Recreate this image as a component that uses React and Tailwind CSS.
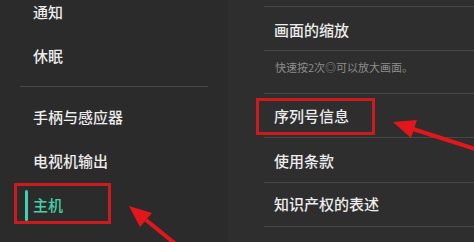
import React from "react";

const font = { fontFamily: '"Noto Sans CJK SC", "Noto Sans", sans-serif' };

function LeftItem({ label, active }) {
  return (
    <div className="h-[44px] flex items-center pl-[25px]">
      {active ? (
        <>
          <div className="w-[3px] h-[31px] bg-[#3fd3b0] rounded-sm" />
          <span className="ml-[5px] text-[15px] font-medium text-[#45cfa9]">{label}</span>
        </>
      ) : (
        <span className="ml-[8px] text-[15px] font-medium text-[#ececec]">{label}</span>
      )}
    </div>
  );
}

function RightRow({ children, h = "h-[44px]" }) {
  return (
    <div className={`${h} border-t border-[#474747] flex items-center pl-[10px]`}>
      {children}
    </div>
  );
}

export default function App() {
  return (
    <div
      className="relative w-[474px] h-[242px] overflow-hidden flex bg-[#2d2d2d]"
      style={font}
    >
      <div className="w-[228px] bg-[#2b2b2b] flex flex-col">
        <div className="mt-[-10px]">
          <LeftItem label="通知" />
          <LeftItem label="休眠" />
        </div>
        <div className="h-[17px] flex items-center pl-[20px] pr-[20px]">
          <div className="h-px w-full bg-[#484848]" />
        </div>
        <LeftItem label="手柄与感应器" />
        <LeftItem label="电视机输出" />
        <LeftItem label="主机" active />
      </div>
      <div className="flex-1 bg-[#2e2e2e] pt-[6px] pl-[36px]">
        <RightRow>
          <span className="text-[15px] font-medium text-[#ececec] mt-[3px]">画面的缩放</span>
        </RightRow>
        <div className="h-[43px] border-t border-[#474747] pl-[11px] pt-[2px]">
          <span className="text-[11px] text-[#8d8d8d]">快速按2次◎可以放大画面。</span>
        </div>
        <RightRow>
          <span className="text-[15px] font-medium text-[#ececec] mt-[2px]">序列号信息</span>
        </RightRow>
        <RightRow h="h-[45px]">
          <span className="text-[15px] font-medium text-[#ececec] mt-[2px]">使用条款</span>
        </RightRow>
        <RightRow>
          <span className="text-[15px] font-medium text-[#ececec]">知识产权的表述</span>
        </RightRow>
        <RightRow />
      </div>

      {/* annotations */}
      <div className="absolute left-[14px] top-[183px] w-[97px] h-[41px] border-[3px] border-[#cc1a1e]" />
      <div className="absolute left-[256px] top-[98px] w-[119px] h-[37px] border-[3px] border-[#cc1a1e]" />
      <svg className="absolute left-0 top-0" width="474" height="242" viewBox="0 0 474 242">
        <line x1="178" y1="246" x2="146" y2="220" stroke="#e3171b" strokeWidth="4" />
        <polygon points="129,206 152,213 140,227" fill="#e3171b" />
        <line x1="478" y1="150" x2="413" y2="129" stroke="#e3171b" strokeWidth="4" />
        <polygon points="393,122 417,120 411,138" fill="#e3171b" />
      </svg>
    </div>
  );
}
